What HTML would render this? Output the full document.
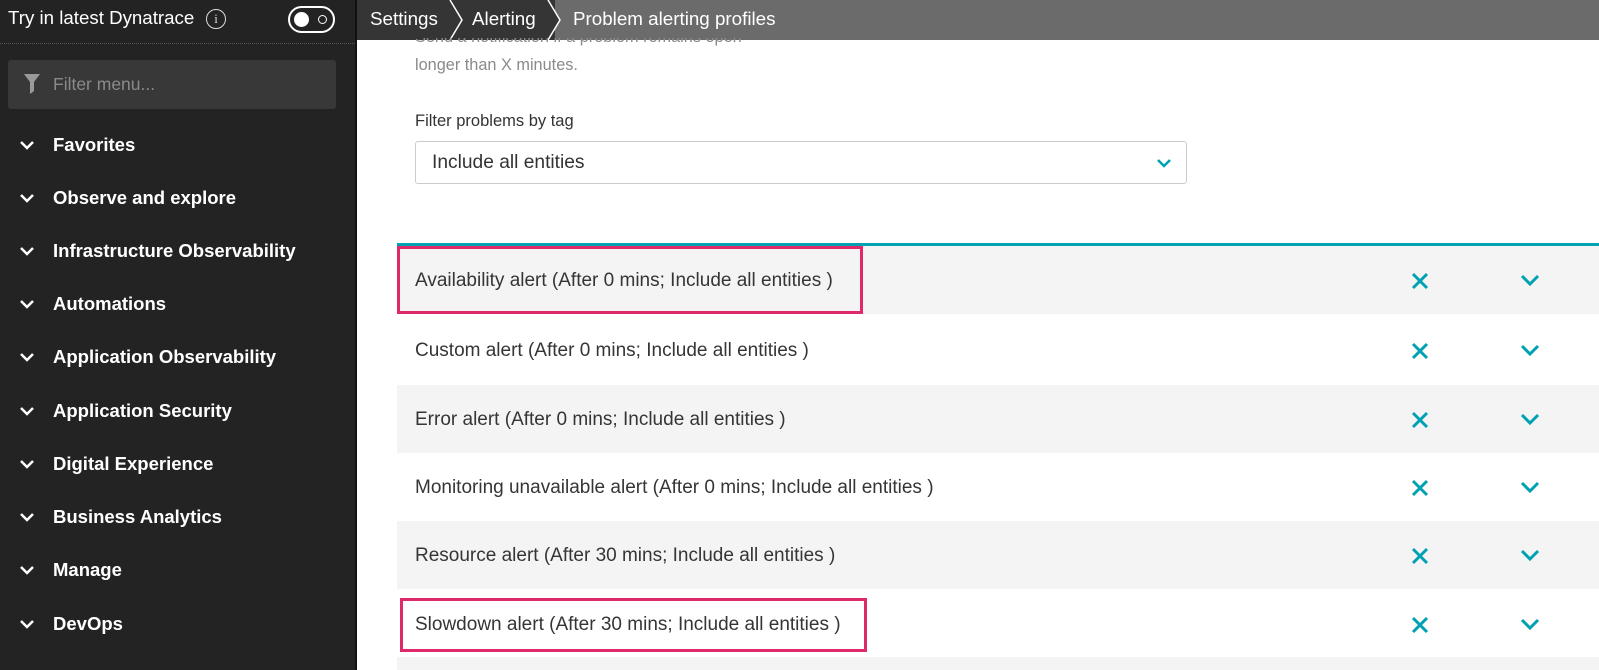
<!DOCTYPE html>
<html><head><meta charset="utf-8"><style>
*{margin:0;padding:0;box-sizing:border-box}
body{width:1599px;height:670px;overflow:hidden;background:#fff;font-family:"Liberation Sans",sans-serif;position:relative}
.side{position:absolute;left:0;top:0;width:355px;height:670px;background:#232323}
.sideborder{position:absolute;left:355px;top:0;width:2px;height:670px;background:#111}
.try{position:absolute;left:8px;top:7px;color:#fff;font-size:18.7px}
.info{position:absolute;left:206px;top:9px;width:20px;height:20px;border:1.5px solid #ddd;border-radius:50%;color:#ddd;font-size:13px;text-align:center;line-height:17px;font-family:"Liberation Serif",serif}
.tog{position:absolute;left:288px;top:6px;width:47px;height:27px;border:2px solid #fff;border-radius:14px}
.tog .k{position:absolute;left:4px;top:4px;width:15px;height:15px;background:#fff;border-radius:50%}
.tog .o{position:absolute;left:28px;top:7px;width:9px;height:9px;border:1.5px solid #fff;border-radius:50%}
.sep{position:absolute;left:0;top:43px;width:355px;border-top:1px dotted #555}
.filter{position:absolute;left:8px;top:60px;width:328px;height:49px;background:#383838;border-radius:3px}
.filter span{position:absolute;left:45px;top:14px;color:#8a8a8a;font-size:17.5px}
.nav{position:absolute;left:53px;color:#fff;font-weight:bold;font-size:18.5px}
.nav svg{position:absolute;left:-34px;top:5px}
.bc{position:absolute;left:357px;top:0;width:1242px;height:40px;background:#353535}
.bc .last{position:absolute;left:198px;top:0;right:0;height:40px;background:#6b6b6b}
.bc span{position:absolute;top:8px;color:#fff;font-size:18.8px}
.gray{color:#8a8a8a;font-size:16.3px;position:absolute;left:415px}
.lbl{position:absolute;left:415px;top:112px;font-size:16.5px;color:#333}
.sel{position:absolute;left:415px;top:141px;width:772px;height:43px;border:1px solid #ccc;border-radius:3px}
.sel span{position:absolute;left:16px;top:0;line-height:41px;font-size:19.2px;color:#333}
.teal{position:absolute;left:397px;top:243px;width:1202px;height:3px;background:#00a1b2}
.row{position:absolute;left:397px;width:1202px;height:68px}
.row span{position:absolute;left:18px;top:0;line-height:70px;font-size:19px;color:#353535}
.row .x{position:absolute;left:1014px;top:26px}
.row .c{position:absolute;left:1123px;top:28px}
.pink{position:absolute;border:3px solid #e0296b}
</style></head><body>
<div class="side"></div><div class="sideborder"></div>
<div class="try">Try in latest Dynatrace</div>
<div class="info">i</div>
<div class="tog"><div class="k"></div><div class="o"></div></div>
<div class="sep"></div>
<div class="filter"><svg style="position:absolute;left:16px;top:14px" width="16" height="20" viewBox="0 0 16 20"><path d="M0 0H16L10 8V17L6 20V8Z" fill="#999"/></svg><span>Filter menu...</span></div>
<div class="nav" style="top:134px"><svg width="16" height="12" viewBox="0 0 16 12"><path d="M2 3L8 9L14 3" stroke="#fff" stroke-width="2.5" fill="none"/></svg>Favorites</div>
<div class="nav" style="top:187px"><svg width="16" height="12" viewBox="0 0 16 12"><path d="M2 3L8 9L14 3" stroke="#fff" stroke-width="2.5" fill="none"/></svg>Observe and explore</div>
<div class="nav" style="top:240px"><svg width="16" height="12" viewBox="0 0 16 12"><path d="M2 3L8 9L14 3" stroke="#fff" stroke-width="2.5" fill="none"/></svg>Infrastructure Observability</div>
<div class="nav" style="top:293px"><svg width="16" height="12" viewBox="0 0 16 12"><path d="M2 3L8 9L14 3" stroke="#fff" stroke-width="2.5" fill="none"/></svg>Automations</div>
<div class="nav" style="top:346px"><svg width="16" height="12" viewBox="0 0 16 12"><path d="M2 3L8 9L14 3" stroke="#fff" stroke-width="2.5" fill="none"/></svg>Application Observability</div>
<div class="nav" style="top:400px"><svg width="16" height="12" viewBox="0 0 16 12"><path d="M2 3L8 9L14 3" stroke="#fff" stroke-width="2.5" fill="none"/></svg>Application Security</div>
<div class="nav" style="top:453px"><svg width="16" height="12" viewBox="0 0 16 12"><path d="M2 3L8 9L14 3" stroke="#fff" stroke-width="2.5" fill="none"/></svg>Digital Experience</div>
<div class="nav" style="top:506px"><svg width="16" height="12" viewBox="0 0 16 12"><path d="M2 3L8 9L14 3" stroke="#fff" stroke-width="2.5" fill="none"/></svg>Business Analytics</div>
<div class="nav" style="top:559px"><svg width="16" height="12" viewBox="0 0 16 12"><path d="M2 3L8 9L14 3" stroke="#fff" stroke-width="2.5" fill="none"/></svg>Manage</div>
<div class="nav" style="top:613px"><svg width="16" height="12" viewBox="0 0 16 12"><path d="M2 3L8 9L14 3" stroke="#fff" stroke-width="2.5" fill="none"/></svg>DevOps</div>

<div class="bc"><div class="last"></div>
<svg style="position:absolute;left:90px;top:0" width="20" height="40" viewBox="0 0 20 40"><path d="M3 0L15 20L3 40" stroke="#fff" stroke-width="1.5" fill="none"/></svg>
<svg style="position:absolute;left:188px;top:0" width="20" height="40" viewBox="0 0 20 40"><path d="M0 0H3L15 20L3 40H0Z" fill="#353535"/><path d="M3 0L15 20L3 40" stroke="#fff" stroke-width="1.5" fill="none"/></svg>
<span style="left:13px">Settings</span><span style="left:115px">Alerting</span><span style="left:216px">Problem alerting profiles</span></div>

<div class="gray" style="top:38px;height:10px;overflow:hidden"><div style="margin-top:-10px">Send a notification if a problem remains open</div></div>
<div class="gray" style="top:56px">longer than X minutes.</div>
<div class="lbl">Filter problems by tag</div>
<div class="sel"><span>Include all entities</span><svg style="position:absolute;left:740px;top:16px" width="16" height="12" viewBox="0 0 16 12"><path d="M2 2L8 8L14 2" stroke="#00a1b2" stroke-width="2.5" fill="none"/></svg></div>

<div class="teal"></div>
<div class="row" style="top:246px;background:#f4f4f4"><span>Availability alert (After 0 mins; Include all entities )</span><svg class="x" width="18" height="18" viewBox="0 0 18 18"><path d="M2 2L16 16M16 2L2 16" stroke="#00a1b2" stroke-width="3"/></svg><svg class="c" width="20" height="12" viewBox="0 0 20 12"><path d="M2 2L10 10L18 2" stroke="#00a1b2" stroke-width="3" fill="none"/></svg></div>
<div class="row" style="top:316px;background:#fff"><span>Custom alert (After 0 mins; Include all entities )</span><svg class="x" width="18" height="18" viewBox="0 0 18 18"><path d="M2 2L16 16M16 2L2 16" stroke="#00a1b2" stroke-width="3"/></svg><svg class="c" width="20" height="12" viewBox="0 0 20 12"><path d="M2 2L10 10L18 2" stroke="#00a1b2" stroke-width="3" fill="none"/></svg></div>
<div class="row" style="top:385px;background:#f4f4f4"><span>Error alert (After 0 mins; Include all entities )</span><svg class="x" width="18" height="18" viewBox="0 0 18 18"><path d="M2 2L16 16M16 2L2 16" stroke="#00a1b2" stroke-width="3"/></svg><svg class="c" width="20" height="12" viewBox="0 0 20 12"><path d="M2 2L10 10L18 2" stroke="#00a1b2" stroke-width="3" fill="none"/></svg></div>
<div class="row" style="top:453px;background:#fff"><span>Monitoring unavailable alert (After 0 mins; Include all entities )</span><svg class="x" width="18" height="18" viewBox="0 0 18 18"><path d="M2 2L16 16M16 2L2 16" stroke="#00a1b2" stroke-width="3"/></svg><svg class="c" width="20" height="12" viewBox="0 0 20 12"><path d="M2 2L10 10L18 2" stroke="#00a1b2" stroke-width="3" fill="none"/></svg></div>
<div class="row" style="top:521px;background:#f4f4f4"><span>Resource alert (After 30 mins; Include all entities )</span><svg class="x" width="18" height="18" viewBox="0 0 18 18"><path d="M2 2L16 16M16 2L2 16" stroke="#00a1b2" stroke-width="3"/></svg><svg class="c" width="20" height="12" viewBox="0 0 20 12"><path d="M2 2L10 10L18 2" stroke="#00a1b2" stroke-width="3" fill="none"/></svg></div>
<div class="row" style="top:590px;background:#fff"><span>Slowdown alert (After 30 mins; Include all entities )</span><svg class="x" width="18" height="18" viewBox="0 0 18 18"><path d="M2 2L16 16M16 2L2 16" stroke="#00a1b2" stroke-width="3"/></svg><svg class="c" width="20" height="12" viewBox="0 0 20 12"><path d="M2 2L10 10L18 2" stroke="#00a1b2" stroke-width="3" fill="none"/></svg></div>
<div style="position:absolute;left:397px;top:657px;width:1202px;height:13px;background:#f4f4f4"></div>

<div class="pink" style="left:397px;top:246px;width:466px;height:68px"></div>
<div class="pink" style="left:400px;top:598px;width:467px;height:54px"></div>
</body></html>
